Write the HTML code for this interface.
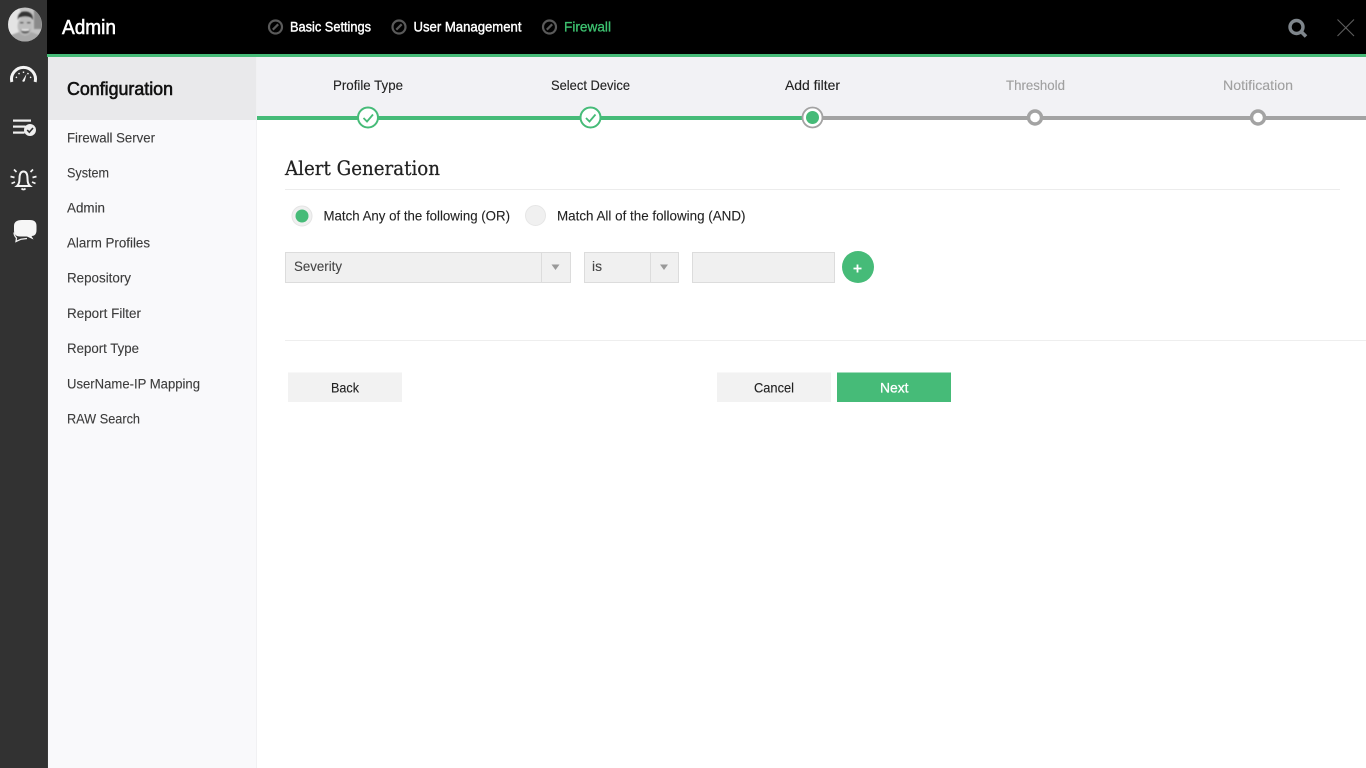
<!DOCTYPE html>
<html lang="en">
<head>
<meta charset="utf-8">
<title>Admin - Firewall - Alert Generation</title>
<style>
html,body{margin:0;padding:0;width:1366px;height:768px;overflow:hidden;background:#fff}
svg{display:block}
text{font-family:"Liberation Sans",sans-serif;font-size:14px;fill:#333}
.menu{fill:#3c3c3c;font-size:13.5px;stroke:#3c3c3c;stroke-width:.12}
.nav{fill:#fff;font-size:14px;stroke:#fff;stroke-width:.4}
.step{fill:#222;font-size:14px;stroke:#222;stroke-width:.12}
.off{fill:#a0a0a0;font-size:14px;stroke:#a0a0a0;stroke-width:.12}
.lbl{fill:#222;font-size:14px;stroke:#222;stroke-width:.1}
.val{fill:#444;font-size:14px;stroke:#444;stroke-width:.1}
</style>
</head>
<body>
<svg width="1366" height="768" viewBox="0 0 1366 768" xmlns="http://www.w3.org/2000/svg">
<defs>
<clipPath id="av"><circle cx="25" cy="24.500" r="17"/></clipPath>
<filter id="bl" x="-20%" y="-20%" width="140%" height="140%"><feGaussianBlur stdDeviation=".9"/></filter>
<filter id="soft" x="-20%" y="-20%" width="140%" height="140%"><feGaussianBlur stdDeviation=".3"/></filter>
</defs>
<rect width="1366" height="768" fill="#fff"/>
<!-- rail -->
<rect width="47" height="768" fill="#323232"/>
<!-- header -->
<rect x="47" width="1319" height="54" fill="#000"/>
<rect x="47" y="54" width="1319" height="3" fill="#46bb78"/>
<!-- sidebar -->
<rect x="47" y="57" width="1" height="711" fill="#3a3a3a"/>
<rect x="48" y="57" width="208" height="711" fill="#f9f9fb"/>
<rect x="48" y="57" width="208" height="63" fill="#e9e9eb"/>
<rect x="256" y="57" width="1" height="711" fill="#f1f1f3"/>
<!-- stepper band -->
<rect x="257" y="57" width="1109" height="59" fill="#f2f2f5"/>
<rect x="257" y="116" width="556" height="4" fill="#46bb78"/>
<rect x="813" y="116" width="553" height="4" fill="#a3a3a3"/>

<!-- avatar -->
<g clip-path="url(#av)">
<rect x="8" y="7" width="34" height="35" fill="#c4c4c4"/>
<g filter="url(#bl)">
<rect x="8" y="7" width="12" height="35" fill="#e4e4e4"/>
<rect x="34" y="7" width="8" height="22" fill="#8a8a8a"/>
<path d="M8 42 L11 35 L19 32 L31 32 L39 35 L42 42Z" fill="#a8a8a8"/>
<ellipse cx="25" cy="26" rx="7.500" ry="9.500" fill="#bdbdbd"/>
<path d="M17.500 20 Q17 11.500 25 11.500 Q33 11.500 33 20 L31 17.500 Q25 15.500 19.500 17.500Z" fill="#303030"/>
<rect x="20" y="22" width="3.500" height="1.400" fill="#444"/>
<rect x="27" y="22" width="3.500" height="1.400" fill="#444"/>
<path d="M20.500 29 Q25 33 30 29 L29 32.500 Q25 35 21.500 32.500Z" fill="#666"/>
<rect x="21.500" y="29.300" width="7.500" height="1.300" fill="#f5f5f5"/>
</g>
</g>

<!-- gauge icon -->
<g filter="url(#soft)">
<g fill="none" stroke="#f4f4f4">
<path d="M11.800 82 A12 12 0 1 1 35.200 82" stroke-width="3"/>
<path d="M15.800 77 L17 77.700 M18.600 73 L19.500 74.200 M23.500 71.500 L23.500 73 M28.400 73 L27.500 74.200 M31.200 77 L30 77.700" stroke-width="1.400"/>
</g>
<path d="M26.500 74 L24.800 81 Q23.400 82.600 22.200 81 Z" fill="#f4f4f4"/>
</g>

<!-- list-check icon -->
<g filter="url(#soft)">
<g fill="#efefef">
<rect x="13" y="119.500" width="18" height="2.200"/>
<rect x="13" y="125.500" width="12.500" height="2.200"/>
<rect x="13" y="131.500" width="11.500" height="2.200"/>
<circle cx="30" cy="130" r="6"/>
</g>
<path d="M27.200 130 L29.300 132.200 L33 128" fill="none" stroke="#323232" stroke-width="1.600"/>
</g>

<!-- bell icon -->
<g fill="none" stroke="#f4f4f4" stroke-width="2" filter="url(#soft)">
<path d="M17 186 Q19.500 184 19.500 178.500 Q19.500 171.500 23.500 171.500 Q27.500 171.500 27.500 178.500 Q27.500 184 30 186 Z"/>
<path d="M21.500 188.500 Q23.500 190.500 25.500 188.500" stroke-width="1.700"/>
<path d="M14 169.500 L16.500 172 M10.500 176.500 L14.500 177.500 M11.500 183.500 L15 182 M33 169.500 L30.500 172 M36.500 176.500 L32.500 177.500 M35.500 183.500 L32 182" stroke-width="1.700"/>
</g>

<!-- chat icon -->
<g filter="url(#soft)">
<path d="M14 232.500 Q14 235.500 16.500 238 L16 241.500 L21 239.200 L27 238.500" fill="none" stroke="#f0f0f0" stroke-width="1.300"/>
<path d="M22 220 L30 220 Q36.500 220 36.500 226 L36.500 230 Q36.500 236 31.500 236 L33.500 239.500 L27 236.500 L20 236.500 Q14 236.500 14 230.500 L14 226 Q14 220 22 220Z" fill="#f6f6f6"/>
</g>

<!-- header text -->
<text x="62" y="34" style="font-size:20px;fill:#fff;stroke:#fff;stroke-width:.55" textLength="54" lengthAdjust="spacingAndGlyphs">Admin</text>

<!-- nav icons -->
<g fill="none" stroke="#5a5a5a" stroke-width="2.200" filter="url(#soft)">
<circle cx="275.500" cy="27" r="6.500"/>
<circle cx="399" cy="27" r="6.500"/>
<circle cx="549.500" cy="27" r="6.500"/>
<path d="M272.800 29.700 L278.200 24.300"/>
<path d="M396.300 29.700 L401.700 24.300"/>
<path d="M546.800 29.700 L552.200 24.300"/>
</g>
<text class="nav" x="290" y="31.500" textLength="81" lengthAdjust="spacingAndGlyphs">Basic Settings</text>
<text class="nav" x="413.500" y="31.500" textLength="108" lengthAdjust="spacingAndGlyphs">User Management</text>
<text x="564" y="31.500" style="fill:#3dc270;font-size:14px;stroke:#3dc270;stroke-width:.3" textLength="47" lengthAdjust="spacingAndGlyphs">Firewall</text>

<!-- search + close -->
<circle cx="1296.500" cy="27" r="6.500" fill="none" stroke="#7f868c" stroke-width="3.400"/>
<path d="M1301.500 32 L1306 36.500" stroke="#7f868c" stroke-width="3.600"/>
<path d="M1337.500 19.500 L1354 36 M1354 19.500 L1337.500 36" stroke="#5e5e5e" stroke-width="1.100"/>

<!-- sidebar text -->
<text x="67" y="95" style="font-size:18px;fill:#111;stroke:#111;stroke-width:.6" textLength="106" lengthAdjust="spacingAndGlyphs">Configuration</text>
<text class="menu" x="67" y="142.500" textLength="88" lengthAdjust="spacingAndGlyphs">Firewall Server</text>
<text class="menu" x="67" y="177.500" textLength="42" lengthAdjust="spacingAndGlyphs">System</text>
<text class="menu" x="67" y="212.500" textLength="38" lengthAdjust="spacingAndGlyphs">Admin</text>
<text class="menu" x="67" y="247.500" textLength="83" lengthAdjust="spacingAndGlyphs">Alarm Profiles</text>
<text class="menu" x="67" y="282.500" textLength="64" lengthAdjust="spacingAndGlyphs">Repository</text>
<text class="menu" x="67" y="318" textLength="74" lengthAdjust="spacingAndGlyphs">Report Filter</text>
<text class="menu" x="67" y="353" textLength="72" lengthAdjust="spacingAndGlyphs">Report Type</text>
<text class="menu" x="67" y="388.500" textLength="133" lengthAdjust="spacingAndGlyphs">UserName-IP Mapping</text>
<text class="menu" x="67" y="423.500" textLength="73" lengthAdjust="spacingAndGlyphs">RAW Search</text>

<!-- steps -->
<text class="step" x="333" y="90" textLength="70" lengthAdjust="spacingAndGlyphs">Profile Type</text>
<text class="step" x="551" y="90" textLength="79" lengthAdjust="spacingAndGlyphs">Select Device</text>
<text class="step" x="785" y="90" textLength="55" lengthAdjust="spacingAndGlyphs">Add filter</text>
<text class="off" x="1006" y="90" textLength="59" lengthAdjust="spacingAndGlyphs">Threshold</text>
<text class="off" x="1223" y="90" textLength="70" lengthAdjust="spacingAndGlyphs">Notification</text>

<g fill="#fff" stroke="#46bb78" stroke-width="2">
<circle cx="368" cy="117.500" r="10"/>
<circle cx="590.500" cy="117.500" r="10"/>
</g>
<g fill="none" stroke="#46bb78" stroke-width="1.800">
<path d="M363.500 118 L367 121.500 L373 114.500"/>
<path d="M586 118 L589.500 121.500 L595.500 114.500"/>
</g>
<circle cx="812.500" cy="117.500" r="10" fill="#fff" stroke="#a3a3a3" stroke-width="1.800"/>
<circle cx="812.500" cy="117.500" r="6.500" fill="#46bb78"/>
<circle cx="1035" cy="117.500" r="6.500" fill="#fff" stroke="#a3a3a3" stroke-width="3.400"/>
<circle cx="1258" cy="117.500" r="6.500" fill="#fff" stroke="#a3a3a3" stroke-width="3.400"/>

<!-- heading -->
<text x="285" y="175" style="font-family:'DejaVu Serif','Liberation Serif',serif;font-size:20px;fill:#222;stroke:#222;stroke-width:.25" textLength="155" lengthAdjust="spacingAndGlyphs">Alert Generation</text>
<rect x="285" y="189" width="1055" height="1" fill="#ececec"/>

<!-- radios -->
<circle cx="302" cy="216" r="10" fill="#f0f0f0" stroke="#e4e4e4"/>
<circle cx="302" cy="216" r="6.500" fill="#46bb78"/>
<circle cx="535.500" cy="215.500" r="10" fill="#f0f0f0" stroke="#e6e6e6"/>
<text class="lbl" x="323.500" y="220.500" textLength="186.500" lengthAdjust="spacingAndGlyphs">Match Any of the following (OR)</text>
<text class="lbl" x="557" y="220.500" textLength="188.500" lengthAdjust="spacingAndGlyphs">Match All of the following (AND)</text>

<!-- selects -->
<rect x="285.500" y="252.500" width="285" height="30" fill="#f0f0f0" stroke="#dcdcdc"/>
<rect x="541" y="253" width="1" height="29" fill="#dcdcdc"/>
<path d="M551.500 264.500 L559.500 264.500 L555.500 270Z" fill="#999"/>
<text class="val" x="294" y="271" textLength="48" lengthAdjust="spacingAndGlyphs">Severity</text>

<rect x="584.500" y="252.500" width="94" height="30" fill="#f0f0f0" stroke="#dcdcdc"/>
<rect x="650" y="253" width="1" height="29" fill="#dcdcdc"/>
<path d="M660 264.500 L668 264.500 L664 270Z" fill="#999"/>
<text class="val" x="592" y="271" textLength="10" lengthAdjust="spacingAndGlyphs">is</text>

<rect x="692.500" y="252.500" width="142" height="30" fill="#f0f0f0" stroke="#dcdcdc"/>
<circle cx="858" cy="267" r="16" fill="#46bb78"/>
<path d="M853.500 268.500 L861.500 268.500 M857.500 264.500 L857.500 272.500" stroke="#fff" stroke-width="1.800"/>

<rect x="285" y="340" width="1081" height="1" fill="#eeeeee"/>

<!-- buttons -->
<rect x="288" y="372.500" width="114" height="29.500" fill="#f2f2f2"/>
<rect x="717" y="372.500" width="114" height="29.500" fill="#f2f2f2"/>
<rect x="837" y="372.500" width="114" height="29.500" fill="#46bb78"/>
<text class="step" x="331" y="392.500" textLength="28" lengthAdjust="spacingAndGlyphs">Back</text>
<text class="step" x="754" y="392.500" textLength="40" lengthAdjust="spacingAndGlyphs">Cancel</text>
<text x="880" y="392.500" style="fill:#fff;font-size:14px;stroke:#fff;stroke-width:.3" textLength="28.500" lengthAdjust="spacingAndGlyphs">Next</text>
</svg>
</body>
</html>
